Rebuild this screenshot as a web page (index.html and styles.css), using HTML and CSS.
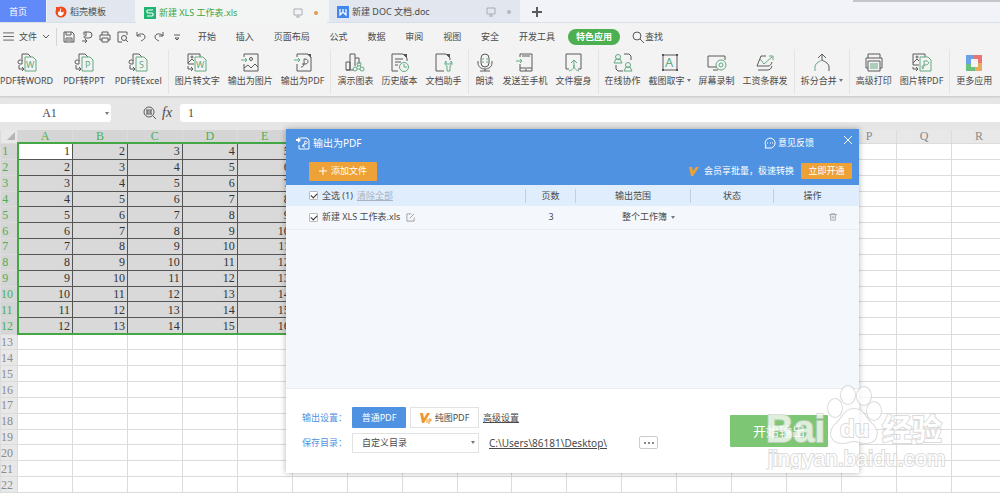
FILE: index.html
```html
<!DOCTYPE html>
<html lang="zh-CN">
<head>
    <meta charset="UTF-8">
    <meta name="viewport" content="width=device-width, initial-scale=1.0">
    <title>新建 XLS 工作表.xls</title>
    <link rel="stylesheet" href="styles.css">
</head>
<body>
    <div class="app">
        <header class="tabs">
            <a class="tab tab-home" href="#">首页</a>
            <a class="tab tab-template" href="#">
                <svg class="logo" viewBox="0 0 12 12"><circle cx="6" cy="6" r="5.5" fill="#f04a1d"/><path d="M1 1h5v5H1z" fill="#f04a1d"/><path d="M6 2c1 2-1 3 0 4s2 0 2-1c2 3-1 5-3 5-3-1-2-4-1-5 0 1 1 1 1 0s0-2 1-3z" fill="#fff"/></svg>
                稻壳模板
            </a>
            <a class="tab tab-doc active" href="#">
                <svg class="logo" viewBox="0 0 12 12"><path d="M0 0h12v12H0z" fill="#21b573"/><path d="M9 3H4C2.500 3 2.500 6 4 6h4c1.500 0 1.500 3 0 3H3" fill="none" stroke="#fff" stroke-width="1.200"/></svg>
                新建 XLS 工作表.xls
                <svg class="screen" viewBox="0 0 10 10"><path d="M1 1h8v6H1zM5 7v2M3 9h4"/></svg>
                <span class="dot dot-orange"></span>
            </a>
            <a class="tab tab-doc" href="#">
                <svg class="logo" viewBox="0 0 12 12"><path d="M0 0h12v12H0z" fill="#3f86f0"/><path d="M3 3v6l3-3 3 3V3M6 3v3" fill="none" stroke="#fff" stroke-width="1.200"/></svg>
                新建 DOC 文档.doc
                <svg class="screen" viewBox="0 0 10 10"><path d="M1 1h8v6H1zM5 7v2M3 9h4"/></svg>
                <span class="dot"></span>
            </a>
            <button class="tab-add" aria-label="新建"><svg viewBox="0 0 10 10"><path d="M5 0v10M0 5h10"/></svg></button>
            <span class="window-edge"></span>
        </header>

        <div class="menu">
            <button class="file-btn">
                <svg class="burger" viewBox="0 0 12 10"><path d="M0 1h12M0 5h12M0 9h12"/></svg>
                文件
                <svg class="chevron" viewBox="0 0 8 8"><path d="M1 2l3 3 3-3"/></svg>
            </button>
            <div class="quick">
                <button aria-label="保存"><svg viewBox="0 0 12 12"><path d="M1 1h8l2 2v8H1zM3 1v3h5V1M3 11V7h6v4M4 9h4"/></svg></button>
                <button aria-label="输出"><svg viewBox="0 0 12 12"><path d="M3 4V1h5a3 3 0 0 1 0 6H5c-3 0-3-2 0-2M1 10h4M4 8l2 2-2 2M5 1v4"/></svg></button>
                <button aria-label="打印"><svg viewBox="0 0 12 12"><path d="M3 4V1h6v3M3 9H1V4h10v5H9M3 7h6v4H3z"/></svg></button>
                <button aria-label="预览"><svg viewBox="0 0 12 12"><path d="M5 11H1V1h9v3M9 9l2 2"/><circle cx="7" cy="7" r="2.500"/></svg></button>
                <button aria-label="撤销"><svg viewBox="0 0 12 12"><path d="M2 1v4h4M2 5c2-3 8-3 8 1 0 2-2 3-4 4"/></svg></button>
                <button aria-label="恢复"><svg viewBox="0 0 12 12"><path d="M10 1v4H6M10 5C8 2 2 2 2 6c0 2 2 3 4 4"/></svg></button>
                <button aria-label="更多"><svg viewBox="0 0 12 12"><path d="M3 4h6M4 7l2 2 2-2z"/></svg></button>
            </div>
            <nav class="menu-nav">
                <a href="#">开始</a>
                <a href="#">插入</a>
                <a href="#">页面布局</a>
                <a href="#">公式</a>
                <a href="#">数据</a>
                <a href="#">审阅</a>
                <a href="#">视图</a>
                <a href="#">安全</a>
                <a href="#">开发工具</a>
            </nav>
            <a class="pill" href="#">特色应用</a>
            <button class="search"><svg viewBox="0 0 12 12"><circle cx="5" cy="5" r="4"/><path d="M8 8l4 4"/></svg>查找</button>
        </div>

        <div class="ribbon">
            <div class="group">
                <button><svg viewBox="0 0 20 20"><path d="M5 6V1h6l3 3M6 7H3a2 2 0 0 0 0 4h2V7M2 12v4h5M5 14l2 2-2 2"/><path class="g" d="M8 4h8l3 3v11H8z"/><text x="9" y="15">W</text></svg>PDF转WORD</button>
                <button><svg viewBox="0 0 20 20"><path d="M5 6V1h6l3 3M6 7H3a2 2 0 0 0 0 4h2V7M2 12v4h5M5 14l2 2-2 2"/><path class="g" d="M8 4h8l3 3v11H8z"/><text x="11" y="15">P</text></svg>PDF转PPT</button>
                <button><svg viewBox="0 0 20 20"><path d="M5 6V1h6l3 3M6 7H3a2 2 0 0 0 0 4h2V7M2 12v4h5M5 14l2 2-2 2"/><path class="g" d="M8 4h8l3 3v11H8z"/><text x="11" y="15">S</text></svg>PDF转Excel</button>
            </div>
            <div class="group">
                <button><svg viewBox="0 0 20 20"><path d="M7 11H1V1h12v3M1 10l4-4 2 2M1 13v3h5M4 14l2 2-2 2"/><circle cx="5" cy="4" r="1"/><path class="g" d="M8 4h8l3 3v11H8z"/><text x="9" y="15">W</text></svg>图片转文字</button>
                <button><svg viewBox="0 0 20 20"><path d="M4 4V1h14v17H4v-7M4 15l4-3 3 3 4-4 3 3"/><circle cx="11" cy="6" r="1.500"/><path class="g" d="M1 7h6M5 5l2 2-2 2"/></svg>输出为图片</button>
                <button><svg viewBox="0 0 20 20"><path d="M4 4V1h11l3 3v14H4v-7M8 14c4 0 3-5 3-8h1c4 0 4 5 0 5H9"/><path class="fill" d="M14 1l4 4V1z"/><path class="g" d="M1 7h6M5 5l2 2-2 2"/></svg>输出为PDF</button>
            </div>
            <div class="group">
                <button><svg viewBox="0 0 20 20"><path d="M1 17V9h4v8zM5 17V1h5v12M10 5h4v6M1 17h8"/><g class="g"><circle cx="14" cy="11" r="2"/><circle cx="10" cy="16" r="2"/><circle cx="17" cy="16" r="2"/><path d="M13 13l-2 2M15 13l1 1M12 16h3"/></g></svg>演示图表</button>
                <button><svg viewBox="0 0 20 20"><path d="M8 18H2V1h11l4 4v3M5 6h8M5 9h6M5 12h3"/><path class="fill" d="M13 1l4 4V1z"/><g class="g"><circle cx="14" cy="14" r="4.500"/><path d="M14 11v3h3"/></g></svg>历史版本</button>
                <button><svg viewBox="0 0 20 20"><path d="M10 18H2V1h10l4 4v2"/><path class="fill" d="M12 1l4 4V1z"/><path class="g" d="M12 8c-2 3-1 4 1 5v5h3v-5c2-1 3-2 1-5v3h-5z"/></svg>文档助手</button>
            </div>
            <div class="group">
                <button><svg viewBox="0 0 20 20"><path d="M6 5a4 4 0 0 1 8 0v5a4 4 0 0 1-8 0zM3 8v2c0 8 14 8 14 0V8M10 16v2M5 18h10"/><path class="g" d="M7 6h2M11 6h2M7 9h2M11 9h2"/></svg>朗读</button>
                <button><svg viewBox="0 0 20 20"><path d="M5 4V1h12v17H5v-7M5 15h12M7 3h8M10 17h2"/><path class="g" d="M1 8h6M5 6l2 2-2 2"/></svg>发送至手机</button>
                <button><svg viewBox="0 0 20 20"><path d="M5 16H2V1h15v15h-3"/><path class="g" d="M10 7v5M7 10l3-3 3 3M5 18c4-1 5-3 5-6 0 3 1 5 5 6"/></svg>文件瘦身</button>
            </div>
            <div class="group">
                <button><svg viewBox="0 0 20 20"><path d="M11 1h5l2 2v4M3 12v4l2 2h5"/><g class="g"><circle cx="5" cy="4" r="2.500"/><path d="M1 10l2-4h4l2 4z"/><circle cx="15" cy="12" r="2.500"/><path d="M11 18l2-4h4l2 4z"/></g></svg>在线协作</button>
                <button><svg viewBox="0 0 20 20"><path d="M3 2h14v15H3z"/><path class="fill" d="M2 1h2v2H2zM16 1h2v2h-2zM2 16h2v2H2zM16 16h2v2h-2z"/><text class="big" x="5" y="14">A</text></svg><span>截图取字<i class="caret"></i></span></button>
                <button><svg viewBox="0 0 20 20"><path d="M10 14H1V3h17v4M6 17h5"/><g class="g"><circle cx="14" cy="12" r="5"/><circle cx="14" cy="12" r="2"/></g></svg>屏幕录制</button>
                <button><svg viewBox="0 0 20 20"><path d="M11 3H6L2 13h11c2 0 3-1 4-4M3 17h9c3 0 4-1 5-4"/><path class="g" d="M5 6l4 5 8-7M14 3h4v4"/></svg>工资条群发</button>
            </div>
            <div class="group">
                <button><svg viewBox="0 0 20 20"><path d="M10 1v6M6 5l4-4 4 4M10 7c4 2 7 4 7 7v4"/><path class="g" d="M10 7c-4 2-7 4-7 7v4"/></svg><span>拆分合并<i class="caret"></i></span></button>
            </div>
            <div class="group">
                <button><svg viewBox="0 0 20 20"><path d="M4 5V1h12v4M4 15H2V5h16v10h-2M4 8h12v10H4z"/><path class="g" d="M6 11h8M6 13h8M6 15h8"/></svg>高级打印</button>
                <button><svg viewBox="0 0 20 20"><path d="M7 12H1V1h12v3M1 10l4-4 2 2M1 14v2h5M4 14l2 2-2 2"/><circle cx="5" cy="4" r="1"/><path class="g" d="M8 4h8l3 3v11H8zM10 16c3-2 2-5 2-8 6-1 6 4 1 4-4 0-4 4-1 3"/></svg>图片转PDF</button>
            </div>
            <div class="group">
                <button><svg class="apps" viewBox="0 0 20 20"><path fill="#6ba0ea" d="M2 2h8v4H7v5H2z"/><path fill="#ea7474" d="M10 2h8v8h-4V6h-4z"/><path fill="#6cc07f" d="M2 11h5v3h4v4H2z"/><path fill="#e6ac62" d="M14 10h4v8h-7v-4h3z"/></svg>更多应用</button>
            </div>
        </div>

        <div class="formula">
            <div class="name-box">
                <input type="text" value="A1" aria-label="名称框">
                <i class="caret"></i>
            </div>
            <svg class="lens" viewBox="0 0 14 14"><circle cx="6" cy="6" r="5"/><path d="M10 10l3 3M3 4h6M3 8h6M4 4v4M8 4v4M4 6h4"/></svg>
            <span class="fx">fx</span>
            <input class="formula-input" type="text" value="1" aria-label="编辑栏">
        </div>

        <main class="sheet">
            <table id="grid" class="grid">
                <thead></thead>
                <tbody></tbody>
            </table>
        </main>

        <section class="dialog" role="dialog" aria-labelledby="dialogTitle">
            <div class="dialog-head">
                <div class="title-row">
                    <svg class="title-icon" viewBox="0 0 14 14"><path d="M4 2h7l2 2v9H3V9M6 10c3 0 2-3 3-5 3 0 3 3 0 3-3 0-3 3 0 3"/><path d="M0 3h2V1l3 3-3 3V5H0z" fill="#fff" stroke="none"/></svg>
                    <h1 id="dialogTitle">输出为PDF</h1>
                    <a class="feedback" href="#"><svg viewBox="0 0 12 12"><path d="M1 11l1-2a5 5 0 1 1 3 2zM3 6h1M6 6h1M8 6h1"/></svg>意见反馈</a>
                    <button class="close" aria-label="关闭"><svg viewBox="0 0 8 8"><path d="M0 0l8 8M8 0L0 8"/></svg></button>
                </div>
                <div class="add-row">
                    <button class="btn-add"><svg viewBox="0 0 8 8"><path d="M4 0v8M0 4h8"/></svg>添加文件</button>
                    <span class="promo"><svg viewBox="0 0 10 10"><path d="M0 1h3l1 4 3-4h3L4 10H2z"/></svg>会员享批量，极速转换</span>
                    <button class="btn-open">立即开通</button>
                </div>
            </div>
            <div class="files">
                <table>
                    <colgroup>
                        <col class="col-name"><col class="col-pages"><col class="col-range"><col class="col-state"><col class="col-action">
                    </colgroup>
                    <thead>
                        <tr>
                            <th><div class="name"><input type="checkbox" id="all" checked><label for="all">全选 (1)</label><a class="clear" href="#">清除全部</a></div></th>
                            <th><div>页数</div></th>
                            <th><div>输出范围</div></th>
                            <th><div>状态</div></th>
                            <th><div>操作</div></th>
                        </tr>
                    </thead>
                    <tbody>
                        <tr>
                            <td><div class="name"><input type="checkbox" id="file1" checked><label for="file1">新建 XLS 工作表.xls</label><svg class="edit" viewBox="0 0 10 10"><path d="M6 1H1v8h8V5M4 6l5-5"/></svg></div></td>
                            <td>3</td>
                            <td><span class="range"><select aria-label="输出范围"><option>整个工作簿</option></select><i class="caret"></i></span></td>
                            <td></td>
                            <td class="action"><button aria-label="删除"><svg viewBox="0 0 10 10"><path d="M0 2h10M3 2V1h4v1M2 2v7h6V2M4 4v3M6 4v3"/></svg></button></td>
                        </tr>
                    </tbody>
                </table>
            </div>
            <div class="dialog-foot">
                <div class="settings">
                    <div class="setting">
                        <span class="setting-label">输出设置：</span>
                        <button class="mode mode-on">普通PDF</button>
                        <button class="mode"><svg viewBox="0 0 12 12"><path d="M0 1h3l1 5 3-5h3L4 11H2z"/><path class="ip" d="M7 7v4M9 12V7h2v2H9"/></svg>纯图PDF</button>
                        <a class="advanced" href="#">高级设置</a>
                    </div>
                    <div class="setting">
                        <label class="setting-label" for="folder">保存目录：</label>
                        <span class="folder"><select id="folder"><option>自定义目录</option></select><i class="caret"></i></span>
                        <a class="path" href="#">C:\Users\86181\Desktop\</a>
                        <button class="browse" aria-label="浏览"><i></i><i></i><i></i></button>
                    </div>
                </div>
                <button class="btn-start">开始输出</button>
            </div>
        </section>

        <svg class="watermark" viewBox="0 0 190 90" aria-hidden="true">
            <g class="paw">
                <ellipse cx="75" cy="28" rx="7" ry="9"/>
                <ellipse cx="88" cy="15" rx="7" ry="9"/>
                <ellipse cx="104" cy="16" rx="7" ry="9"/>
                <ellipse cx="114" cy="31" rx="7" ry="9"/>
                <path d="M94 29c10 0 11 9 18 15 8 7 6 19-6 19-6 0-8-2-12-2s-6 2-12 2c-12 0-14-12-6-19 7-6 8-15 18-15z"/>
            </g>
            <text class="bai" x="6" y="62">Bai</text>
            <text class="du" x="80" y="57">du</text>
            <text class="jy" x="122" y="60">经验</text>
            <text class="url" x="8" y="86">jingyan.baidu.com</text>
        </svg>
    </div>
    <script src="script.js"></script>
</body>
</html>
```
FILE: styles.css
```css
* {
    box-sizing: border-box;
}
body {
    margin: 0;
    overflow: hidden;
    font-family: "Noto Sans", "Noto Sans CJK SC", sans-serif;
    font-size: 9px;
    line-height: 14px;
    color: #4a4a4a;
    background-color: #e6e6e6;
}
button, input, select {
    margin: 0;
    padding: 0;
    border: none;
    background: none;
    font: inherit;
    color: inherit;
}
button {
    cursor: pointer;
}
a {
    color: inherit;
    text-decoration: none;
}
svg {
    display: block;
    flex: none;
    fill: none;
    stroke: #5a5a5a;
    stroke-width: 1;
}
.app {
    position: relative;
    display: flex;
    flex-direction: column;
    height: 100vh;
    overflow: hidden;
}
.caret {
    display: inline-block;
    border: 2px solid transparent;
    border-top: 3px solid #777;
    border-bottom: none;
}

/* tabs */
.tabs {
    display: flex;
    height: 23px;
    background-color: #f1f3f8;
    border-bottom: 1px solid #d7dfe9;
}
.tab {
    display: flex;
    align-items: center;
    gap: 3px;
    padding: 2px 8px 0;
    background-color: #e1e6ef;
}
.tab-home {
    width: 46px;
    justify-content: center;
    padding-right: 18px;
    color: #fff;
    background-color: #608af8;
}
.tab-template {
    width: 88px;
    margin: 0 1px;
}
.tab-doc {
    width: 191px;
    margin-right: 2px;
    padding: 2px 9px 0 8px;
}
.tab.active {
    height: 23px;
    color: #3da742;
    background-color: #f3f4f4;
}
.logo {
    width: 12px;
    height: 12px;
    stroke: none;
}
.screen {
    width: 10px;
    height: 10px;
    margin-left: auto;
    stroke: #a9adb5;
}
.dot {
    width: 4px;
    height: 4px;
    margin-left: 8px;
    border-radius: 50%;
    background-color: #b3b8c2;
}
.dot-orange {
    background-color: #e39a4b;
}
.tab-add {
    padding: 2px 10px 0;
}
.tab-add svg {
    width: 10px;
    height: 10px;
    stroke-width: 2;
}
.window-edge {
    width: 147px;
    height: 2px;
    margin-left: auto;
    background-color: #c4c5c9;
}

/* menu */
.menu {
    display: flex;
    align-items: center;
    height: 27px;
    background-color: #f3f3f3;
}
.file-btn {
    display: flex;
    align-items: center;
    gap: 5px;
    width: 57px;
    height: 18px;
    padding-left: 3px;
    border-right: 1px solid #d5d5d5;
}
.burger {
    width: 11px;
    height: 9px;
}
.chevron {
    width: 8px;
    height: 8px;
}
.quick {
    display: flex;
    gap: 6px;
    width: 141px;
    padding-left: 6px;
}
.quick svg {
    width: 12px;
    height: 12px;
}
.menu-nav {
    display: flex;
    justify-content: space-between;
    width: 357px;
}
.pill {
    margin: 0 12px 0 13px;
    padding: 1px 8px;
    border-radius: 8px;
    font-weight: bold;
    color: #fff;
    background-color: #4caf50;
}
.search {
    display: flex;
    align-items: center;
    gap: 1px;
}
.search svg {
    width: 12px;
    height: 12px;
}

/* ribbon */
.ribbon {
    display: flex;
    height: 46px;
    background-color: #f3f3f3;
    box-shadow: 0 1px 2px rgba(0, 0, 0, 0.15);
}
.group {
    display: flex;
    height: 44px;
    padding: 0 2px;
    border-right: 1px solid #e4e4e4;
}
.group:first-child {
    gap: 2px;
    padding-left: 0;
}
.group:first-child button:first-child {
    padding-left: 0;
}
.group:last-child {
    border-right: none;
}
.group button {
    display: flex;
    flex-direction: column;
    align-items: center;
    gap: 1px;
    padding: 3px 4px 0;
    white-space: nowrap;
}
.group svg {
    width: 20px;
    height: 20px;
}
.group .g {
    stroke: #62aa80;
}
.group .fill {
    fill: #555;
    stroke: none;
}
.group text {
    font-size: 9px;
    fill: #62aa80;
    stroke: none;
}
.group .big {
    font-size: 13px;
}
.group .caret {
    margin: 0 0 2px 2px;
}
.group .apps {
    stroke: none;
}

/* formula bar */
.formula {
    display: flex;
    align-items: center;
    height: 34px;
    font-family: "Liberation Serif", "Noto Sans CJK SC", serif;
    font-size: 12px;
}
.name-box {
    display: flex;
    align-items: center;
    width: 111px;
    height: 18px;
    padding-right: 2px;
    border-radius: 0 3px 3px 0;
    background-color: #fff;
}
.name-box input {
    width: 100px;
    flex: 1;
    padding-right: 6px;
    text-align: center;
}
.lens {
    width: 14px;
    height: 14px;
    margin: 0 5px 0 32px;
}
.fx {
    width: 18px;
    font-size: 14px;
    font-style: italic;
}
.formula-input {
    flex: 1;
    height: 18px;
    padding: 0 8px;
    border-radius: 3px 0 0 3px;
    background-color: #fff;
}

/* sheet */
.sheet {
    flex: 1;
    min-height: 0;
    background-color: #fff;
}
.grid {
    width: 1007px;
    height: 100%;
    table-layout: fixed;
    border-collapse: collapse;
    font-family: "Liberation Serif", serif;
    font-size: 12px;
    line-height: 12px;
    color: #333;
}
.grid th, .grid td {
    padding: 0;
    border: 1px solid #dcdcdc;
    font-weight: normal;
}
.grid th {
    color: #8a8a8a;
    background-color: #e8e8e8;
}
.grid thead th {
    border-top: none;
}
.grid .corner {
    width: 17px;
}
.grid .corner i {
    display: block;
    width: 0;
    margin-left: 6px;
    border-left: 8px solid transparent;
    border-bottom: 8px solid #b5b5b5;
}
.grid tbody th {
    padding-right: 7px;
}
.grid td {
    padding-right: 2px;
    text-align: right;
}
.grid th.selected {
    color: #4caf50;
    background-color: #d5d5d5;
}
.grid td.selected {
    border-color: #555;
    background-color: #d9d9d9;
}
.grid td.current {
    background-color: #fff;
}
.grid td.first-row {
    border-top: 2px solid #43a843;
}
.grid td.last-row {
    border-bottom: 2px solid #43a843;
}
.grid td.first-col {
    border-left: 2px solid #43a843;
}

/* export dialog, floats over the sheet */
.dialog {
    position: absolute;
    top: 129px;
    left: 286px;
    display: flex;
    flex-direction: column;
    width: 573px;
    height: 344px;
    background-color: #fff;
    box-shadow: 0 0 6px rgba(0, 0, 0, 0.3);
}
.dialog-head {
    height: 56px;
    padding: 4px 7px 0 10px;
    color: #fff;
    background-color: #5092e2;
}
.dialog-head svg {
    stroke: #fff;
}
.title-row, .add-row, .promo, .feedback, .btn-add {
    display: flex;
    align-items: center;
}
.title-row {
    height: 20px;
}
.title-icon {
    width: 14px;
    height: 14px;
    margin-right: 3px;
}
h1 {
    margin: 0;
    font-size: 10px;
    font-weight: normal;
}
.feedback {
    gap: 2px;
    margin-left: auto;
}
.feedback svg {
    width: 12px;
    height: 12px;
}
.close {
    margin: 0 0 6px 30px;
}
.close svg {
    width: 8px;
    height: 8px;
}
.add-row {
    height: 36px;
    padding-left: 13px;
}
.btn-add {
    justify-content: center;
    gap: 4px;
    width: 68px;
    height: 19px;
    border-radius: 1px;
    background-color: #eda137;
}
.btn-add svg {
    width: 8px;
    height: 8px;
}
.promo {
    gap: 5px;
    margin-left: auto;
}
.promo svg {
    width: 10px;
    height: 10px;
    fill: #eda137;
    stroke: none;
}
.btn-open {
    width: 51px;
    height: 16px;
    margin-left: 7px;
    border-radius: 1px;
    background-color: #eda137;
}
.files {
    flex: 1;
    background-color: #f4f8fd;
    border-bottom: 1px solid #ececec;
}
.files table {
    width: 100%;
    table-layout: fixed;
    border-collapse: collapse;
}
.col-name {
    width: 240px;
}
.col-pages {
    width: 50px;
}
.col-range {
    width: 115px;
}
.col-state {
    width: 83px;
}
.files th, .files td {
    padding: 0;
    font-weight: normal;
    text-align: center;
}
.files th {
    height: 21px;
    background-color: #dfedfd;
}
.files th div {
    border-right: 1px solid #c3cfdd;
}
.files th:last-child div {
    padding-right: 8px;
    border-right: none;
}
.files td {
    height: 23px;
    border-bottom: 1px solid #e9eef4;
}
.name {
    display: flex;
    align-items: center;
    gap: 4px;
    padding-left: 23px;
}
.name input {
    appearance: none;
    display: flex;
    align-items: center;
    justify-content: center;
    width: 9px;
    height: 9px;
    border: 1px solid #bbb;
    border-radius: 1px;
    background-color: #fff;
}
.name input:checked::before {
    content: "";
    width: 5px;
    height: 3px;
    margin-bottom: 1px;
    border-left: 1px solid #333;
    border-bottom: 1px solid #333;
    transform: rotate(-45deg);
}
.clear {
    color: #a9b3bf;
    text-decoration: underline;
}
.edit {
    width: 9px;
    height: 9px;
    margin-left: 2px;
    stroke: #999;
}
.range, .folder {
    display: inline-flex;
    align-items: center;
}
select {
    appearance: none;
}
.range {
    gap: 3px;
    padding-left: 30px;
}
.files .action {
    padding-left: 32px;
}
.action svg {
    width: 8px;
    height: 8px;
    stroke: #999;
}
.action button {
    display: block;
    margin: auto;
}
.dialog-foot {
    display: flex;
    align-items: flex-start;
    justify-content: space-between;
    height: 84px;
    padding: 18px 31px 0 16px;
}
.settings {
    display: flex;
    flex-direction: column;
    gap: 4px;
}
.setting {
    display: flex;
    align-items: center;
    height: 21px;
}
.setting-label {
    width: 50px;
    color: #5092e2;
}
.mode {
    display: flex;
    align-items: center;
    justify-content: center;
    gap: 3px;
    width: 69px;
    height: 21px;
    border: 1px solid #e2e2e2;
}
.mode svg {
    width: 12px;
    height: 12px;
    fill: #f0982d;
    stroke: none;
}
.mode .ip {
    fill: none;
    stroke: #f0982d;
}
.mode-on {
    width: 54px;
    margin-right: 4px;
    border: none;
    border-radius: 1px;
    color: #fff;
    background-color: #5092e2;
}
.advanced {
    margin-left: 4px;
    text-decoration: underline;
}
.folder {
    width: 127px;
    height: 20px;
    padding: 0 3px 0 9px;
    border: 1px solid #e2e2e2;
}
.folder select {
    flex: 1;
}
.path {
    width: 150px;
    padding-left: 10px;
    font-size: 10px;
    text-decoration: underline;
}
.browse {
    display: flex;
    align-items: center;
    justify-content: center;
    gap: 2px;
    width: 19px;
    height: 13px;
    margin-left: 10px;
    border: 1px solid #ccc;
    border-radius: 2px;
}
.browse i {
    width: 2px;
    height: 2px;
    background-color: #888;
}
.btn-start {
    width: 98px;
    height: 32px;
    margin-top: 8px;
    border-radius: 1px;
    font-size: 13px;
    color: #fff;
    background-color: #7dc674;
}

/* watermark */
.watermark {
    position: absolute;
    top: 380px;
    left: 760px;
    width: 190px;
    height: 90px;
    opacity: 0.75;
    fill: #fff;
    stroke: #d0d0d0;
    stroke-width: 2;
    paint-order: stroke;
    pointer-events: none;
}
.watermark text {
    font-family: "Liberation Sans", "Noto Sans CJK SC", sans-serif;
    font-weight: bold;
}
.watermark .bai {
    font-size: 38px;
}
.watermark .du {
    font-size: 24px;
}
.watermark .jy {
    font-size: 30px;
}
.watermark .url {
    font-size: 22px;
    font-weight: normal;
}
```
FILE: script.js
```js
const columns = 'ABCDEFGHIJKLMNOPQR'.split('');
const rows = 22;
const selectedRows = 12;
const selectedColumns = 6;

const thead = document.querySelector('#grid thead');
const tbody = document.querySelector('#grid tbody');

let head = '<tr><th class="corner"><i></i></th>';
columns.forEach((letter, c) => {
    head += `<th class="${c < selectedColumns ? 'selected' : ''}">${letter}</th>`;
});
thead.innerHTML = head + '</tr>';

for (let r = 0; r < rows; r++) {
    const row = document.createElement('tr');
    let cells = `<th class="${r < selectedRows ? 'selected' : ''}">${r + 1}</th>`;
    columns.forEach((letter, c) => {
        const classes = [];
        const selected = r < selectedRows && c < selectedColumns;
        if (selected) {
            classes.push('selected');
            if (r === 0 && c === 0) classes.push('current');
            if (r === 0) classes.push('first-row');
            if (r === selectedRows - 1) classes.push('last-row');
            if (c === 0) classes.push('first-col');
        }
        cells += `<td class="${classes.join(' ')}">${selected ? r + c + 1 : ''}</td>`;
    });
    row.innerHTML = cells;
    tbody.appendChild(row);
}
```
